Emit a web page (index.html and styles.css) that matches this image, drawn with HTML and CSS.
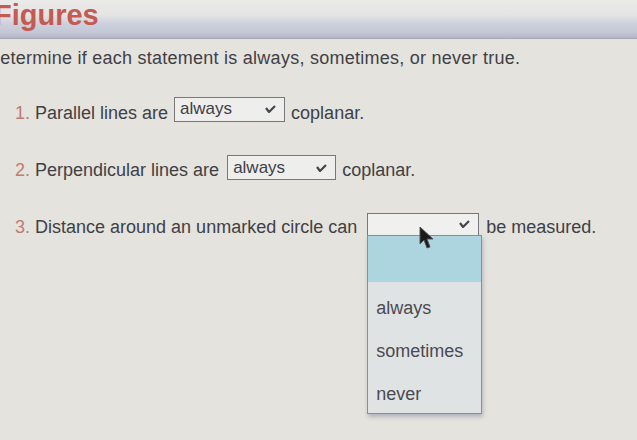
FILE: index.html
```html
<!DOCTYPE html>
<html>
  <head>
    <meta charset="utf-8">
    <link rel="stylesheet" href="styles.css">
  </head>
  <body>
    <div class="header">
      <div class="title">Figures</div>
    </div>
    <div class="intro">Determine if each statement is always, sometimes, or never true.</div>

    <div class="questions">
      <div class="question">
        <span class="num">1.</span>
        <span>Parallel lines are</span>
        <div class="pick w1">
          <span class="pick-value">always</span>
          <svg class="chev" width="11" height="8" viewBox="0 0 11 8"><path d="M1 3 L4 7 L10 1" fill="none" stroke="#45454c" stroke-width="2.2"/></svg>
        </div>
        <span>coplanar.</span>
      </div>
      <div class="question">
        <span class="num">2.</span>
        <span>Perpendicular lines are</span>
        <div class="pick w2">
          <span class="pick-value">always</span>
          <svg class="chev" width="11" height="8" viewBox="0 0 11 8"><path d="M1 3 L4 7 L10 1" fill="none" stroke="#45454c" stroke-width="2.2"/></svg>
        </div>
        <span>coplanar.</span>
      </div>
      <div class="question">
        <span class="num">3.</span>
        <span>Distance around an unmarked circle can</span>
        <div class="pick w3">
          <span class="pick-value"></span>
          <svg class="chev" width="11" height="8" viewBox="0 0 11 8"><path d="M1 3 L4 7 L10 1" fill="none" stroke="#45454c" stroke-width="2.2"/></svg>
          <div class="menu">
            <div class="menu-item selected"></div>
            <div class="menu-item">always</div>
            <div class="menu-item">sometimes</div>
            <div class="menu-item">never</div>
          </div>
          <svg class="cursor" width="16" height="25" viewBox="0 0 16 25">
            <path d="M1 1 L1 18 L5 14 L8 22 L11 21 L8 13 L14 13 Z" fill="#1a1a1a" stroke="#555" stroke-width="1"/>
          </svg>
        </div>
        <span class="tail">be measured.</span>
      </div>
    </div>
  </body>
</html>
```

FILE: styles.css
```css
html {
  height: 100%;
}
body {
  margin: 0;
  padding: 0;
  min-height: 100%;
  background-color: #e5e3dd;
  font-family: "Liberation Sans", Arial, sans-serif;
  color: #404046;
}
.header {
  height: 38px;
  background: linear-gradient(to bottom, #ebeae8 0px, #e4e4e5 15px, #cdd0dc 24px, #c4c7d6 32px, #b3b6c4 38px);
  border-bottom: 1px solid #a4a7b3;
}
.title {
  margin-left: -6px;
  font-size: 29px;
  font-weight: bold;
  color: #c45a52;
  line-height: 30px;
}
.intro {
  margin: 9px 0 0 -13px;
  font-size: 18px;
  line-height: 20px;
  letter-spacing: 0.25px;
}
.questions {
  display: flex;
  flex-direction: column;
  gap: 31px;
  padding: 32px 0 0 15px;
  font-size: 18px;
}
.question {
  display: flex;
  align-items: center;
  gap: 6px;
  height: 26px;
}
.num {
  color: #c27a76;
  margin-right: -1px;
}
.pick {
  position: relative;
  display: flex;
  align-items: center;
  justify-content: space-between;
  height: 25px;
  border: 1px solid #77777c;
  background-color: #eeeeec;
  padding: 0 8px 0 5px;
  box-sizing: border-box;
  margin-top: -8px;
  font-size: 17px;
}
.w1 {
  width: 111px;
}
.w2 {
  width: 109px;
  margin-left: 2px;
  margin-top: -5px;
}
.w3 {
  width: 112px;
  height: 23px;
  margin-left: 4px;
  background-color: #f0f0ee;
  margin-top: -6px;
}
.tail {
  margin-left: 1px;
}
.menu {
  position: absolute;
  top: 21px;
  left: -1px;
  width: 115px;
  height: 179px;
  border: 1px solid #8c8e94;
  background-color: #e0e3e3;
  box-shadow: 1px 3px 4px rgba(90, 95, 140, 0.35);
  box-sizing: border-box;
}
.menu-item {
  height: 43px;
  line-height: 43px;
  padding-left: 8px;
  font-size: 18px;
  color: #4a4a52;
}
.menu-item.selected {
  height: 46px;
  background-color: #acd5df;
  margin-bottom: 5px;
}
.cursor {
  position: absolute;
  left: 51px;
  top: 12px;
}
```
